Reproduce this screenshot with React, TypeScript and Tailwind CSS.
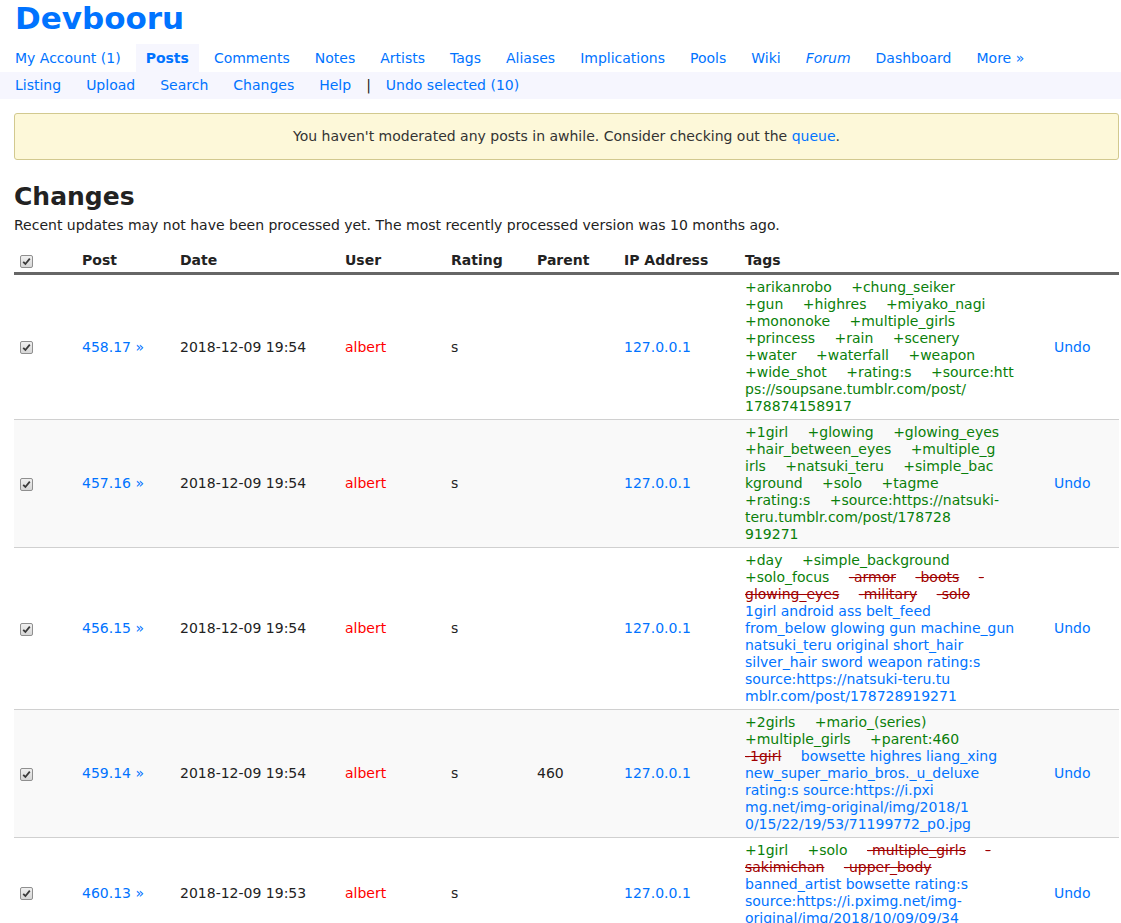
type Kind = 'ins' | 'del' | 'obs'
type Tok = [Kind, string]

const ins = (t: string): Tok => ['ins', t]
const del = (t: string): Tok => ['del', t]
const obs = (t: string): Tok => ['obs', t]

const rows: { post: string; date: string; parent: string; lines: Tok[][] }[] = [
  {
    post: '458.17',
    date: '2018-12-09 19:54',
    parent: '',
    lines: [
      [ins('+arikanrobo'), ins('+chung_seiker')],
      [ins('+gun'), ins('+highres'), ins('+miyako_nagi')],
      [ins('+mononoke'), ins('+multiple_girls')],
      [ins('+princess'), ins('+rain'), ins('+scenery')],
      [ins('+water'), ins('+waterfall'), ins('+weapon')],
      [ins('+wide_shot'), ins('+rating:s'), ins('+source:htt')],
      [ins('ps://soupsane.tumblr.com/post/')],
      [ins('178874158917')],
    ],
  },
  {
    post: '457.16',
    date: '2018-12-09 19:54',
    parent: '',
    lines: [
      [ins('+1girl'), ins('+glowing'), ins('+glowing_eyes')],
      [ins('+hair_between_eyes'), ins('+multiple_g')],
      [ins('irls'), ins('+natsuki_teru'), ins('+simple_bac')],
      [ins('kground'), ins('+solo'), ins('+tagme')],
      [ins('+rating:s'), ins('+source:https://natsuki-')],
      [ins('teru.tumblr.com/post/178728')],
      [ins('919271')],
    ],
  },
  {
    post: '456.15',
    date: '2018-12-09 19:54',
    parent: '',
    lines: [
      [ins('+day'), ins('+simple_background')],
      [ins('+solo_focus'), del('-armor'), del('-boots'), del('-')],
      [del('glowing_eyes'), del('-military'), del('-solo')],
      [obs('1girl android ass belt_feed')],
      [obs('from_below glowing gun machine_gun')],
      [obs('natsuki_teru original short_hair')],
      [obs('silver_hair sword weapon rating:s')],
      [obs('source:https://natsuki-teru.tu')],
      [obs('mblr.com/post/178728919271')],
    ],
  },
  {
    post: '459.14',
    date: '2018-12-09 19:54',
    parent: '460',
    lines: [
      [ins('+2girls'), ins('+mario_(series)')],
      [ins('+multiple_girls'), ins('+parent:460')],
      [del('-1girl'), obs('bowsette highres liang_xing')],
      [obs('new_super_mario_bros._u_deluxe')],
      [obs('rating:s source:https://i.pxi')],
      [obs('mg.net/img-original/img/2018/1')],
      [obs('0/15/22/19/53/71199772_p0.jpg')],
    ],
  },
  {
    post: '460.13',
    date: '2018-12-09 19:53',
    parent: '',
    lines: [
      [ins('+1girl'), ins('+solo'), del('-multiple_girls'), del('-')],
      [del('sakimichan'), del('-upper_body')],
      [obs('banned_artist bowsette rating:s')],
      [obs('source:https://i.pximg.net/img-')],
      [obs('original/img/2018/10/09/09/34')],
      [obs('/71064832_p0.jpg')],
    ],
  },
]

const topNav = ['Comments', 'Notes', 'Artists', 'Tags', 'Aliases', 'Implications', 'Pools', 'Wiki']
const subNav = ['Listing', 'Upload', 'Search', 'Changes', 'Help']

function Check() {
  return (
    <span className="inline-flex w-[13px] h-[13px] items-center justify-center rounded-[2px] border border-[#8f8f8f] bg-gradient-to-b from-[#f0f0f0] to-[#d6d6d6] align-middle">
      <svg width="9" height="9" viewBox="0 0 9 9">
        <path d="M1.2 4.8 L3.4 7 L7.8 1.6" fill="none" stroke="#3a3a3a" strokeWidth="1.8" />
      </svg>
    </span>
  )
}

function TagLine({ toks }: { toks: Tok[] }) {
  return (
    <div className="whitespace-nowrap">
      {toks.map(([k, t], i) => (
        <span key={i}>
          {k === 'ins' && <span className="text-[#0a7f0a] mr-[15px]">{t}</span>}
          {k === 'del' && <span className="text-[#a00000] line-through mr-[15px]">{t}</span>}
          {k === 'obs' && <span className="text-[#0073ff]">{t}</span>}{' '}
        </span>
      ))}
    </div>
  )
}

export default function App() {
  return (
    <div className="min-h-screen bg-white text-[#222] text-[14px] leading-[17px] font-['DejaVu_Sans',Verdana,sans-serif]">
      <header>
        <div className="h-[44px] pl-[15px]">
          <h1 className="text-[31px] leading-[36px] font-bold text-[#0073ff]">Devbooru</h1>
        </div>
        <nav className="flex gap-[5px] pl-[15px] text-[#0073ff]">
          <a className="py-[5px] pr-[10px] leading-[18px]">My Account (1)</a>
          <a className="py-[5px] px-[10px] leading-[18px] bg-[#f6f6fe] font-bold">Posts</a>
          {topNav.map(n => (
            <a key={n} className="py-[5px] px-[10px] leading-[18px]">{n}</a>
          ))}
          <a className="py-[5px] px-[10px] leading-[18px] italic">Forum</a>
          <a className="py-[5px] px-[10px] leading-[18px]">Dashboard</a>
          <a className="py-[5px] px-[10px] leading-[18px]">More »</a>
        </nav>
        <nav className="flex gap-[5px] pl-[15px] bg-[#f6f6fe] text-[#0073ff]">
          {subNav.map((n, i) => (
            <a key={n} className={i === 0 ? 'pt-[4px] pb-[5px] pr-[10px] leading-[18px]' : 'pt-[4px] pb-[5px] px-[10px] leading-[18px]'}>{n}</a>
          ))}
          <span className="pt-[4px] pb-[5px] leading-[18px] text-[#222]">|</span>
          <a className="pt-[4px] pb-[5px] px-[10px] leading-[18px]">Undo selected (10)</a>
        </nav>
      </header>

      <main className="pl-[14px] pr-[2px]">
        <div className="mt-[14px] rounded-[3px] border border-[#d2c98f] bg-[#fdf8d9] py-[14px] text-center text-[#333]">
          You haven't moderated any posts in awhile. Consider checking out the <a className="text-[#0073ff]">queue</a>.
        </div>

        <h2 className="mt-[22px] text-[25px] leading-[30px] font-bold text-[#222]">Changes</h2>
        <p className="mt-[5px]">Recent updates may not have been processed yet. The most recently processed version was 10 months ago.</p>

        <table className="mt-[13px] w-full table-fixed border-collapse">
          <colgroup>
            <col className="w-[62px]" />
            <col className="w-[98px]" />
            <col className="w-[165px]" />
            <col className="w-[106px]" />
            <col className="w-[86px]" />
            <col className="w-[87px]" />
            <col className="w-[121px]" />
            <col className="w-[309px]" />
            <col className="w-[71px]" />
          </colgroup>
          <thead>
            <tr className="border-b-[3px] border-[#666] text-left font-bold">
              <th className="pl-[6px] pt-[5px] pb-[3px]"><Check /></th>
              <th className="pl-[6px] pt-[5px] pb-[3px]">Post</th>
              <th className="pl-[6px] pt-[5px] pb-[3px]">Date</th>
              <th className="pl-[6px] pt-[5px] pb-[3px]">User</th>
              <th className="pl-[6px] pt-[5px] pb-[3px]">Rating</th>
              <th className="pl-[6px] pt-[5px] pb-[3px]">Parent</th>
              <th className="pl-[6px] pt-[5px] pb-[3px]">IP Address</th>
              <th className="pl-[6px] pt-[5px] pb-[3px]">Tags</th>
              <th className="pl-[6px] pt-[5px] pb-[3px]"></th>
            </tr>
          </thead>
          <tbody>
            {rows.map((r, i) => (
              <tr key={r.post} className={i % 2 === 1 ? 'bg-[#f9f9f9] border-b border-[#d0d0d0]' : 'bg-white border-b border-[#d0d0d0]'}>
                <td className="pl-[6px] align-middle"><Check /></td>
                <td className="pl-[6px] text-[#0073ff]">{r.post} »</td>
                <td className="pl-[6px]">{r.date}</td>
                <td className="pl-[6px] text-[#ff0000]">albert</td>
                <td className="pl-[6px]">s</td>
                <td className="pl-[6px]">{r.parent}</td>
                <td className="pl-[6px] text-[#0073ff]">127.0.0.1</td>
                <td className="pl-[6px] py-[4px]">
                  {r.lines.map((l, j) => (
                    <TagLine key={j} toks={l} />
                  ))}
                </td>
                <td className="pl-[6px] text-[#0073ff]">Undo</td>
              </tr>
            ))}
          </tbody>
        </table>
      </main>
    </div>
  )
}
